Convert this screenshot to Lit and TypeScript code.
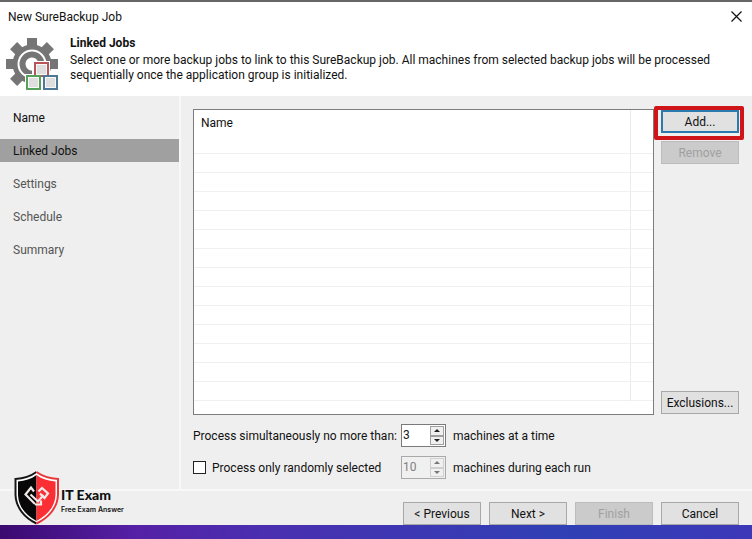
import { LitElement, html, css } from "lit";
import { customElement, property } from "lit/decorators.js";

@customElement("number-spinner")
class NumberSpinner extends LitElement {
  @property({ type: Number }) value = 0;
  @property({ type: Boolean }) disabled = false;
  @property() label = "";

  static styles = css`
    :host {
      display: block;
    }
    .box {
      box-sizing: border-box;
      display: flex;
      align-items: center;
      width: 45px;
      height: 23px;
      padding: 1px;
      border: 1px solid #7a7a7a;
      background: #fff;
    }
    .box.off {
      border-color: #a9a9a9;
      background: #f0f0f0;
    }
    .field {
      flex: 1;
      min-width: 0;
      width: 0;
      padding: 0 0 2px;
      border: 0;
      background: none;
      color: #1a1a1a;
      font: 12px/16px Roboto, "Open Sans", sans-serif;
      appearance: textfield;
      outline: none;
    }
    .field::-webkit-inner-spin-button {
      display: none;
    }
    .field:disabled {
      color: #808080;
    }
    .steps {
      display: grid;
      grid-template-rows: 1fr 1fr;
      width: 14px;
      height: 19px;
    }
    .step {
      box-sizing: border-box;
      display: flex;
      align-items: center;
      justify-content: center;
      min-height: 0;
      padding: 0;
      border: 1px solid #a0a0a0;
      background: #f0f0f0;
      color: #222;
    }
    .step:disabled {
      border-color: #cfcfcf;
      color: #777;
    }
    .arrow {
      display: block;
      width: 6px;
      height: 3px;
      fill: currentColor;
    }
  `;

  private step(delta: number) {
    this.value = Math.max(1, this.value + delta);
  }

  render() {
    return html`<div class="box ${this.disabled ? "off" : ""}">
      <input class="field" type="number" aria-label=${this.label} .value=${String(this.value)} ?disabled=${this.disabled} />
      <div class="steps">
        <button class="step" aria-label="Increase" ?disabled=${this.disabled} @click=${() => this.step(1)}>
          <svg class="arrow" viewBox="0 0 6 3"><path d="M0 3L3 0L6 3z" /></svg>
        </button>
        <button class="step" aria-label="Decrease" ?disabled=${this.disabled} @click=${() => this.step(-1)}>
          <svg class="arrow" viewBox="0 0 6 3"><path d="M0 0L3 3L6 0z" /></svg>
        </button>
      </div>
    </div>`;
  }
}

@customElement("app-root")
class AppRoot extends LitElement {
  private steps = ["Name", "Linked Jobs", "Settings", "Schedule", "Summary"];
  private current = 1;

  static styles = css`
    :host {
      display: flex;
      flex-direction: column;
      min-height: 100vh;
      box-sizing: border-box;
      background: #efefef;
      color: #111;
      font: 12px/16px Roboto, "Open Sans", sans-serif;
    }
    .head {
      box-sizing: border-box;
      height: 96px;
      border-top: 2px solid #666;
      background: #fff;
    }
    .title {
      display: flex;
      align-items: center;
      justify-content: space-between;
      height: 30px;
      padding: 0 8px;
    }
    .close {
      display: flex;
      padding: 0 2px 2px;
      border: 0;
      background: none;
    }
    .intro {
      display: flex;
      gap: 8px;
      padding: 3px 4px 0;
    }
    .gear {
      width: 58px;
      height: 58px;
      flex: none;
    }
    .intro h1 {
      margin: 0 0 2px;
      font-size: 12px;
      line-height: 16px;
    }
    .intro p {
      margin: 0;
      max-width: 660px;
      line-height: 15px;
    }
    .body {
      flex: 1;
      display: flex;
    }
    .side {
      box-sizing: border-box;
      width: 181px;
      flex: none;
      display: flex;
      flex-direction: column;
      gap: 10px;
      padding-top: 10px;
      border-right: 2px solid #f8f8f8;
    }
    .item {
      display: block;
      padding: 4px 13px 3px;
      line-height: 16px;
      color: #555;
      text-decoration: none;
    }
    .item.done {
      color: #111;
    }
    .item.current {
      background: #a0a0a0;
      color: #111;
    }
    .main {
      flex: 1;
      min-width: 0;
      display: flex;
      flex-direction: column;
      gap: 9px;
      padding: 13px 13px 10px 12px;
    }
    .jobs {
      flex: 1;
      display: flex;
      gap: 7px;
    }
    .list {
      flex: 1;
      box-sizing: border-box;
      border: 1px solid #7c7c7c;
      background: #fff;
    }
    .grid {
      width: 100%;
      table-layout: fixed;
      border-collapse: separate;
      border-spacing: 0;
    }
    .grid th {
      height: 25px;
      padding: 0 7px;
      font-weight: 400;
      text-align: left;
    }
    .grid td {
      box-sizing: border-box;
      height: 19px;
      padding: 0;
      border-bottom: 1px solid #f0f0f0;
    }
    .grid .tail {
      width: 23px;
      box-sizing: border-box;
      padding: 0;
      border-left: 1px solid #ebebeb;
    }
    .actions {
      display: flex;
      flex-direction: column;
      gap: 8px;
      padding: 1px 0;
    }
    .btn {
      box-sizing: border-box;
      width: 78px;
      height: 23px;
      padding: 0;
      border: 1px solid #a8a8a8;
      background: #e1e1e1;
      color: #111;
      font: inherit;
    }
    .btn:disabled {
      border-color: #bcbcbc;
      background: #cbcbcb;
      color: #a0a0a0;
    }
    .btn.focus {
      border: 2px solid #2a7ab0;
    }
    .bottom {
      margin-top: auto;
    }
    .marked {
      position: relative;
      display: flex;
    }
    .marked::after {
      content: "";
      position: absolute;
      inset: -4px -5px -7px -7px;
      border: 4px solid #cf1519;
      border-radius: 2px;
      pointer-events: none;
    }
    .options {
      display: grid;
      grid-template-columns: 201px 45px 1fr;
      column-gap: 7px;
      row-gap: 9px;
      align-items: center;
      white-space: nowrap;
    }
    .check {
      display: flex;
      align-items: center;
      gap: 6px;
    }
    .tick {
      appearance: none;
      box-sizing: border-box;
      width: 13px;
      height: 13px;
      margin: 0;
      border: 1px solid #222;
      background: #fff;
    }
    .tick:checked {
      background: #2a7ab0;
    }
    .foot {
      position: relative;
      box-sizing: border-box;
      height: 36px;
      display: flex;
      justify-content: flex-end;
      gap: 8px;
      padding: 11px 13px 0;
      border-top: 2px solid #f8f8f8;
    }
    .brand {
      position: absolute;
      left: 13px;
      bottom: 0;
      display: flex;
      align-items: center;
      color: #111;
    }
    .shield {
      width: 48px;
      height: 54px;
    }
    .names {
      padding-top: 8px;
    }
    .big {
      font: 900 14px/16px Lato, "Open Sans", sans-serif;
    }
    .small {
      font: 600 7px/14px Inter, "Open Sans", sans-serif;
    }
    .strip {
      height: 14px;
      background: linear-gradient(90deg, #3a0a70, #5520a5 18%, #4a2fb0 35%, #3040b5 75%, #3d38b8);
    }
  `;

  render() {
    const teeth = [0, 45, 90, 135, 180, 225, 270, 315];
    return html`
      <header class="head">
        <div class="title">
          <span>New SureBackup Job</span>
          <button class="close" aria-label="Close">
            <svg width="11" height="11" viewBox="0 0 11 11" fill="none" stroke="#111" stroke-width="1.2">
              <path d="M.5 .5L10.5 10.5M10.5 .5L.5 10.5" />
            </svg>
          </button>
        </div>
        <div class="intro">
          <svg class="gear" viewBox="0 0 58 58" aria-hidden="true">
            <g fill="#757575">
              <circle cx="28" cy="29" r="19.5" />
              ${teeth.map(
                (a) => html`<svg overflow="visible"><path transform="rotate(${a} 28 29)" d="M23 3h10v9h-10z" /></svg>`
              )}
            </g>
            <circle cx="28" cy="29" r="13.5" fill="none" stroke="#fff" stroke-width="2" />
            <path d="M33.5 25.5A6.5 6.5 0 1 0 28 35.5" fill="#fff" />
            <g fill="#dedede">
              <path d="M30 28h14v13H30zM23 41h13v13H23zM40 41h13v13H40z" stroke="#fff" stroke-width="4" />
              <path d="M31 28h13v13H31z" stroke="#b9545b" stroke-width="2" />
              <path d="M23 41h13v13H23z" stroke="#57a05a" stroke-width="2" />
              <path d="M40 41h13v13H40z" stroke="#4d7896" stroke-width="2" />
              <path d="M32.5 29.5h10v10h-10zM24.5 42.5h10v10h-10zM41.5 42.5h10v10h-10z" fill="none" stroke="#f8f8f8" />
            </g>
          </svg>
          <div>
            <h1>Linked Jobs</h1>
            <p>
              Select one or more backup jobs to link to this SureBackup job. All machines from selected backup jobs will
              be processed sequentially once the application group is initialized.
            </p>
          </div>
        </div>
      </header>
      <div class="body">
        <nav class="side">
          ${this.steps.map(
            (name, i) =>
              html`<a href="#" class="item ${i === this.current ? "current" : i < this.current ? "done" : ""}">${name}</a>`
          )}
        </nav>
        <main class="main">
          <div class="jobs">
            <div class="list">
              <table class="grid">
                <thead>
                  <tr><th>Name</th><th class="tail"></th></tr>
                </thead>
                <tbody>
                  ${Array.from({ length: 14 }, () => html`<tr><td></td><td class="tail"></td></tr>`)}
                </tbody>
              </table>
            </div>
            <div class="actions">
              <div class="marked"><button class="btn focus">Add...</button></div>
              <button class="btn" disabled>Remove</button>
              <button class="btn bottom">Exclusions...</button>
            </div>
          </div>
          <div class="options">
            <span>Process simultaneously no more than:</span>
            <number-spinner .value=${3} label="Machines at a time"></number-spinner>
            <span>machines at a time</span>
            <label class="check"><input class="tick" type="checkbox" />Process only randomly selected</label>
            <number-spinner .value=${10} disabled label="Machines during each run"></number-spinner>
            <span>machines during each run</span>
          </div>
        </main>
      </div>
      <footer class="foot">
        <div class="brand">
          <svg class="shield" viewBox="0 0 48 54" aria-hidden="true">
            <path d="M23.5 .5C18 4.5 10 7 1.5 7.500V24C2 38 12 48 23.5 53.5C35 48 45.5 38 46 24V7.5C37 7 29 4.5 23.5 .5z" fill="#fff" />
            <path d="M23.5 1C18 5 10 7.500 2.5 8V24C3 37 12 47 23.5 52.5" fill="none" stroke="#161616" stroke-width="2" />
            <path d="M23.5 1C29 5 37 7.500 45 8V24C44.5 37 35 47 23.5 52.5" fill="none" stroke="#e8383b" stroke-width="2" />
            <path d="M23.5 4C18 8 12 10 5 10.500V24C5.5 36 13 44.5 23.5 50z" fill="#080808" />
            <path d="M23.5 4C29 8 35 10 42.500 10.500V24C42 36 34 44.5 23.5 50z" fill="#fb2f33" />
            <g fill="none" stroke="#f3e9e9" stroke-width="2.2">
              <path d="M21 20.500L18 16.500L12.500 23.500L22 33" />
              <path d="M17.500 23.500L25 30.500L30.500 24" />
              <path d="M25.500 20.500L29 17L35 22.500L31.500 27L27 22.500" />
              <path d="M22 33.500H28V29.500" />
            </g>
          </svg>
          <div class="names">
            <div class="big">IT Exam</div>
            <div class="small">Free Exam Answer</div>
          </div>
        </div>
        <button class="btn">&lt; Previous</button>
        <button class="btn">Next &gt;</button>
        <button class="btn" disabled>Finish</button>
        <button class="btn">Cancel</button>
      </footer>
      <div class="strip"></div>
    `;
  }
}
